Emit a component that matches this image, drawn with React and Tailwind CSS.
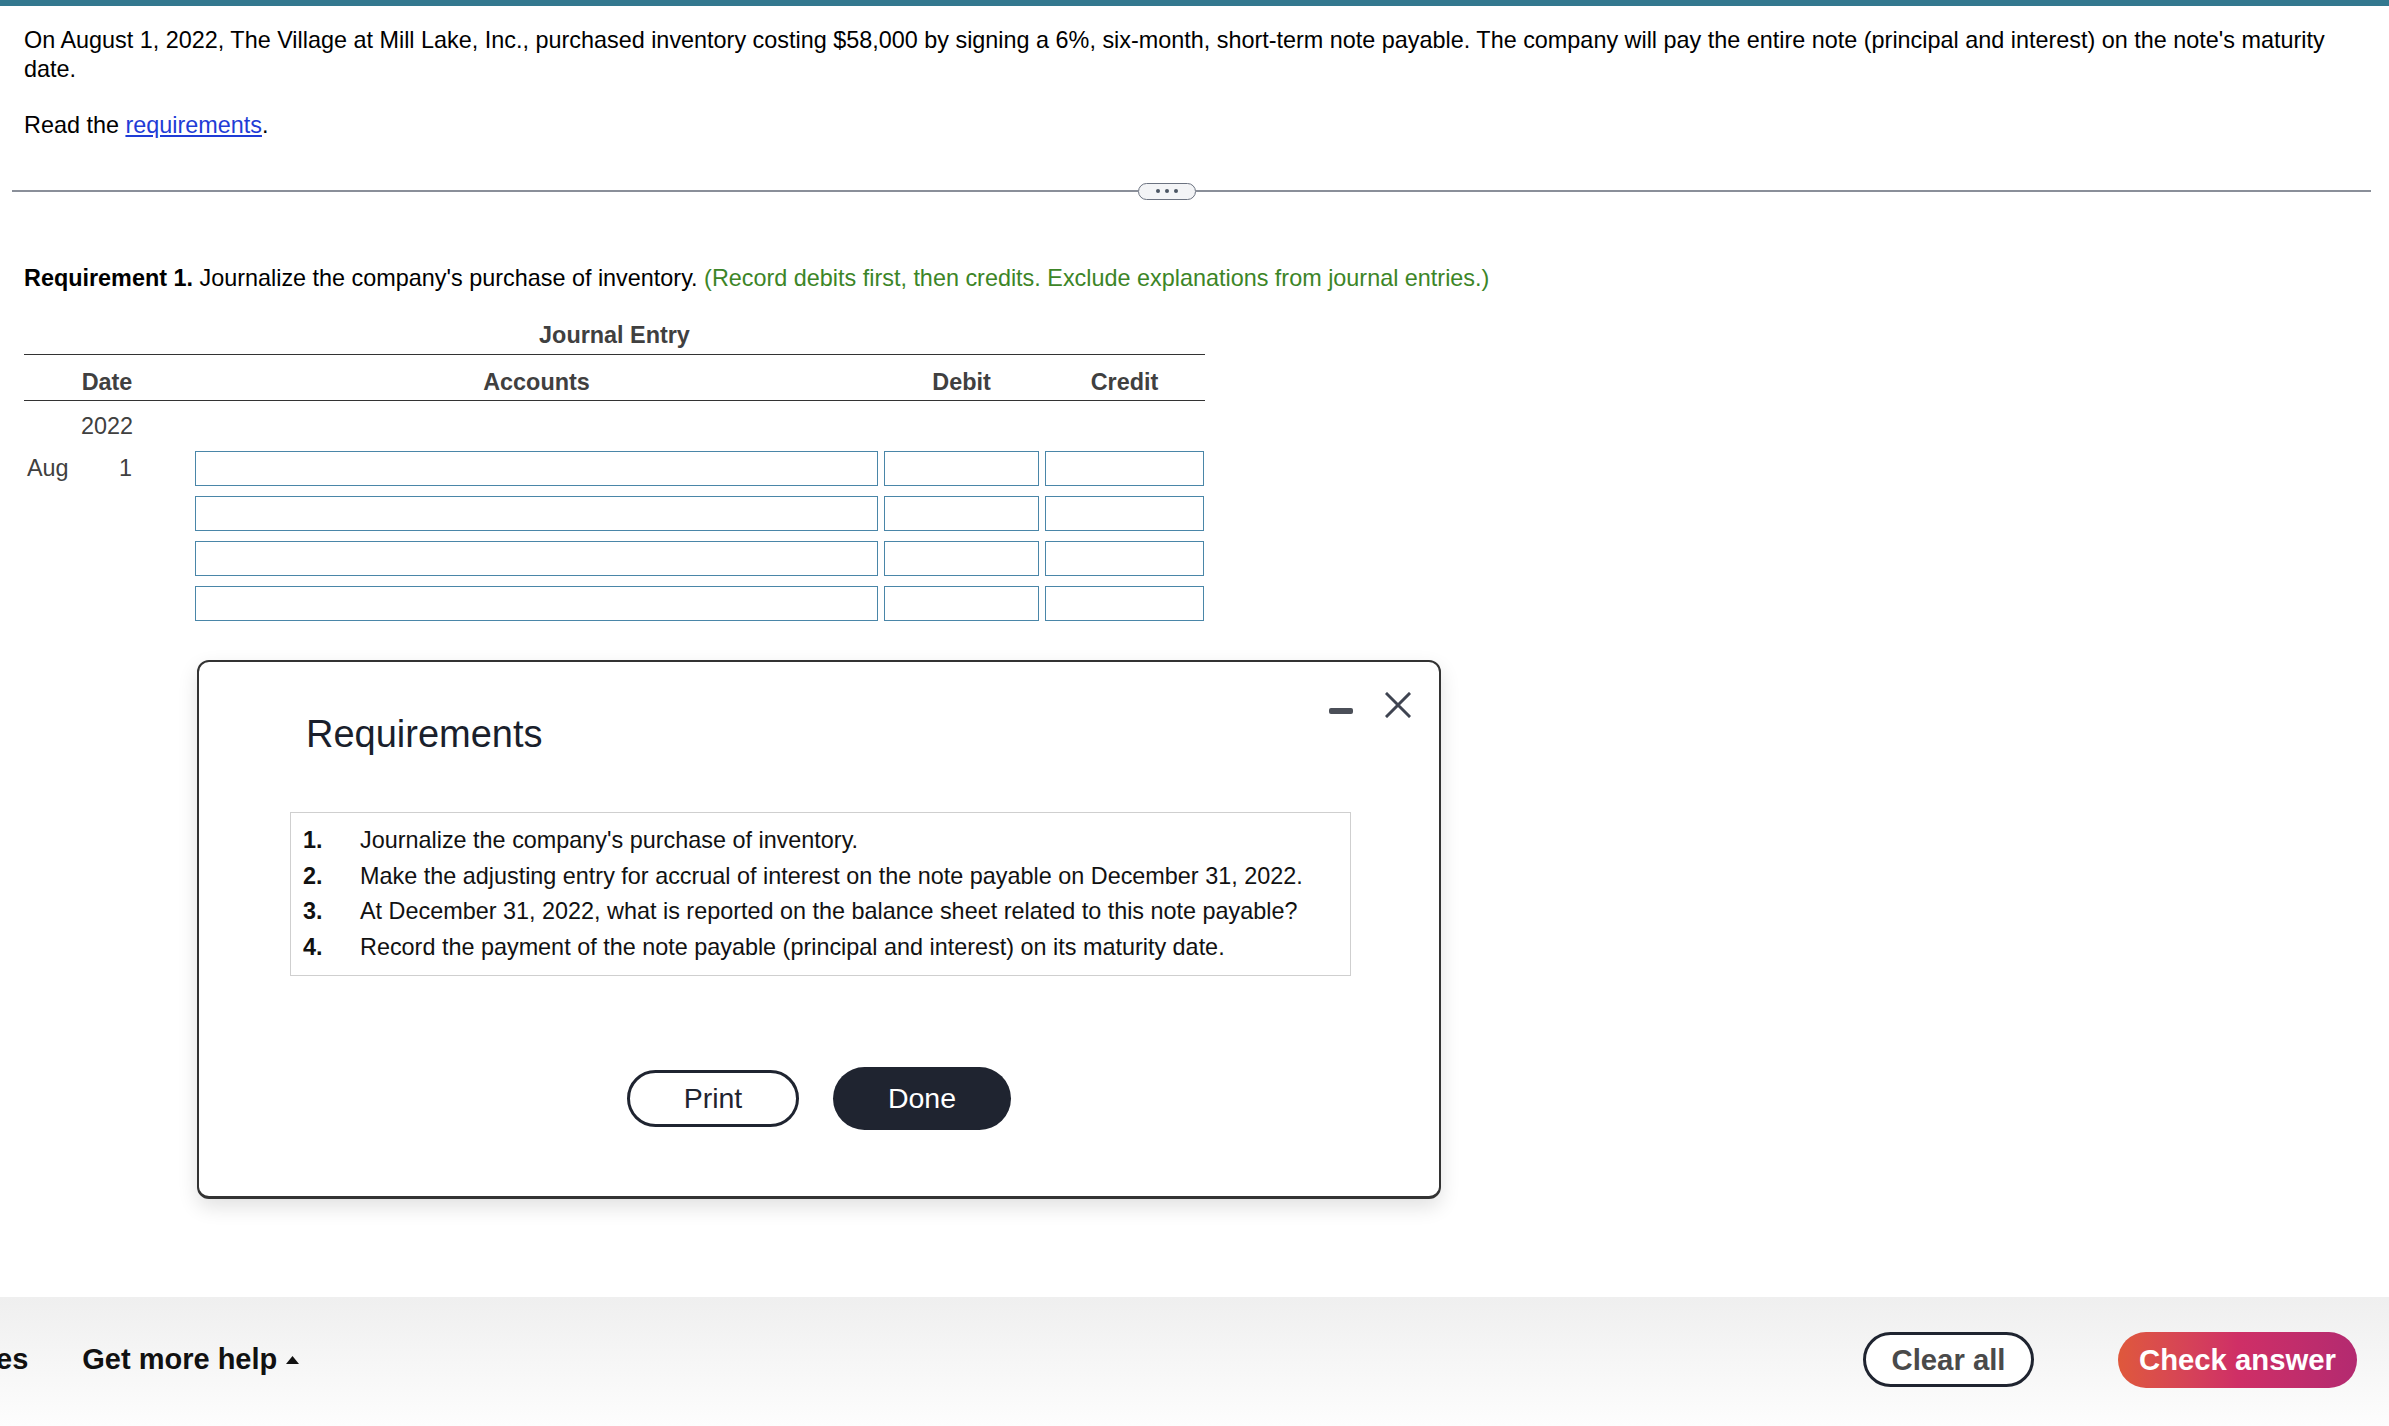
import React from 'react';

const rows = [0, 1, 2, 3];

const requirements = [
    "Journalize the company's purchase of inventory.",
    'Make the adjusting entry for accrual of interest on the note payable on December 31, 2022.',
    'At December 31, 2022, what is reported on the balance sheet related to this note payable?',
    'Record the payment of the note payable (principal and interest) on its maturity date.',
];

const App = () => {
    return (
        <div className="relative flex min-h-[1426px] flex-col bg-white font-['Liberation_Sans',Arial,sans-serif] text-[23.4px] text-black">
            <div className="h-[6px] bg-[#33788f]" />

            <div className="px-[24px]">
                <p className="pt-[19.5px] leading-[29px]">
                    On August 1, 2022, The Village at Mill Lake, Inc., purchased inventory costing $58,000 by signing a 6%, six-month, short-term note payable. The company will pay the entire note (principal and interest) on the note's maturity date.
                </p>
                <p className="mt-[27px] leading-[29px]">
                    Read the <a className="cursor-pointer text-[#1f3cd6] underline">requirements</a>.
                </p>

                {/* Separator */}
                <div className="ml-[-12px] mr-[-6px] mt-[43px] flex items-center">
                    <div className="h-[1.5px] w-[1126px] bg-[#8a8f99]" />
                    <div className="flex h-[17px] w-[58px] items-center justify-center gap-[5px] rounded-full border-[1.5px] border-[#6b7280] bg-[#f3f4f6]">
                        <span className="h-[4px] w-[4px] rounded-full bg-[#4b5563]" />
                        <span className="h-[4px] w-[4px] rounded-full bg-[#4b5563]" />
                        <span className="h-[4px] w-[4px] rounded-full bg-[#4b5563]" />
                    </div>
                    <div className="h-[1.5px] flex-1 bg-[#8a8f99]" />
                </div>

                <p className="mt-[64px] leading-[29px]">
                    <span className="font-bold">Requirement 1.</span> Journalize the company's purchase of inventory.{' '}
                    <span className="text-[#3c8527]">(Record debits first, then credits. Exclude explanations from journal entries.)</span>
                </p>

                {/* Journal entry table */}
                <div className="mt-[28px] w-[1181px] text-[#404040]">
                    <div className="text-center font-bold leading-[29px]">Journal Entry</div>
                    <div className="mt-[4px] flex border-y-[1.5px] border-[#333] pb-[2.5px] pt-[13.5px] font-bold leading-[29px]">
                        <div className="w-[166px] text-center">Date</div>
                        <div className="ml-[5px] w-[683px] text-center">Accounts</div>
                        <div className="ml-[6px] w-[155px] text-center">Debit</div>
                        <div className="ml-[6px] w-[159px] text-center">Credit</div>
                    </div>
                    <div className="pt-[11.5px]">
                        <div className="w-[166px] text-center leading-[29px]">2022</div>
                        <div className="mt-[10px] space-y-[10px]">
                            {rows.map((r) => (
                                <div key={r} className="flex h-[35px] items-center">
                                    <div className="flex w-[166px] items-center leading-[29px]">
                                        {r === 0 && (
                                            <>
                                                <span className="inline-block w-[95px] pl-[3px]">Aug</span>
                                                <span>1</span>
                                            </>
                                        )}
                                    </div>
                                    <input type="text" className="ml-[5px] h-[35px] w-[683px] border-[1.5px] border-[#4a86a8] bg-white outline-none" />
                                    <input type="text" className="ml-[6px] h-[35px] w-[155px] border-[1.5px] border-[#4a86a8] bg-white outline-none" />
                                    <input type="text" className="ml-[6px] h-[35px] w-[159px] border-[1.5px] border-[#4a86a8] bg-white outline-none" />
                                </div>
                            ))}
                        </div>
                    </div>
                </div>
            </div>

            {/* Requirements dialog */}
            <div className="absolute left-[197px] top-[660px] h-[539px] w-[1244px] rounded-[12px] border-2 border-b-[3px] border-[#333] bg-white shadow-[0_8px_20px_rgba(0,0,0,0.12)]">
                <div className="absolute left-[1130px] top-[46px] h-[6px] w-[24px] rounded-[2px] bg-[#4b4f58]" />
                <svg className="absolute left-[1186px] top-[30px]" width="26" height="26" viewBox="0 0 26 26">
                    <path d="M2 2 L24 24 M24 2 L2 24" stroke="#3f4451" strokeWidth="3" strokeLinecap="square" fill="none" />
                </svg>

                <h2 className="pl-[107px] pt-[50px] text-[38px] leading-[44px] text-[#1a1f2c]">Requirements</h2>

                <div className="ml-[91px] mt-[56px] w-[1061px] border-[1.5px] border-[#cfcfcf] px-[12px] pb-[13px] pt-[13px]">
                    <ol className="space-y-[6.5px]">
                        {requirements.map((text, i) => (
                            <li key={i} className="flex leading-[29px] text-[#111]">
                                <span className="w-[57px] font-bold">{i + 1}.</span>
                                <span>{text}</span>
                            </li>
                        ))}
                    </ol>
                </div>

                <div className="mt-[91px] flex items-center justify-center gap-[34px]">
                    <button className="h-[57px] w-[172px] rounded-full border-[3px] border-[#1f2430] bg-white text-[28.5px] text-[#1f2430]">
                        Print
                    </button>
                    <button className="h-[63px] w-[178px] rounded-full bg-[#1f2430] text-[28.5px] text-white">
                        Done
                    </button>
                </div>
            </div>

            {/* Footer */}
            <div className="mt-auto flex h-[129px] items-center bg-linear-to-b from-[#efefef] to-[#fdfdfd] pb-[4px]">
                <span className="ml-[-4px] text-[29px] font-bold text-[#111]">es</span>
                <div className="ml-[54px] flex items-center gap-[9px] text-[29px] font-bold text-[#111]">
                    Get more help
                    <svg width="13" height="8" viewBox="0 0 13 8">
                        <path d="M6.5 0 L13 8 L0 8 Z" fill="#111" />
                    </svg>
                </div>
                <button className="ml-auto h-[55px] w-[171px] rounded-full border-[3px] border-[#1f2430] bg-white text-[29.3px] font-bold text-[#4a4a4a]">
                    Clear all
                </button>
                <button className="ml-[84px] mr-[32px] h-[56px] w-[239px] rounded-full bg-linear-to-r from-[#df583b] via-[#cf2f66] to-[#b32a70] text-[29.3px] font-bold text-white">
                    Check answer
                </button>
            </div>
        </div>
    );
};

export default App;
